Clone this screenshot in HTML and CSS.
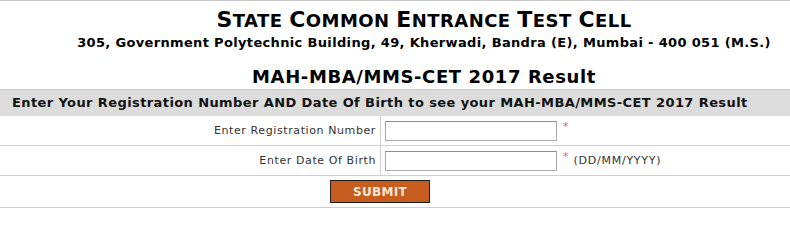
FILE: index.html
```html
<!DOCTYPE html>
<html>

<head>
    <meta charset="utf-8">
    <title>MAH-MBA/MMS-CET 2017 Result</title>
    <link rel="stylesheet" href="styles.css">
</head>

<body>
<div class="top-rule"></div>
<div class="masthead">
    <h1 class="org">
        <span class="cap">S</span>TATE <span class="cap">C</span>OMMON <span class="cap">E</span>NTRANCE <span class="cap">T</span>EST <span class="cap">C</span>ELL
    </h1>
    <p class="address">305, Government Polytechnic Building, 49, Kherwadi, Bandra (E), Mumbai - 400 051 (M.S.)</p>
    <h2 class="exam">MAH-MBA/MMS-CET 2017 Result</h2>
</div>

<form class="result-form" name="resultForm" onsubmit="return false;">
    <div class="band">Enter Your Registration Number AND Date Of Birth to see your MAH-MBA/MMS-CET 2017 Result</div>

    <div class="row">
        <label class="label" for="regno">Enter Registration Number</label>
        <div class="field">
            <input id="regno" class="text" type="text" name="regno">
            <span class="req">*</span>
        </div>
    </div>

    <div class="row">
        <label class="label" for="dob">Enter Date Of Birth</label>
        <div class="field">
            <input id="dob" class="text" type="text" name="dob">
            <span class="req">*</span>
            <span class="hint">(DD/MM/YYYY)</span>
        </div>
    </div>

    <div class="actions">
        <div class="actions-inner">
            <button type="submit" class="submitButton">SUBMIT</button>
        </div>
    </div>
</form>
</body>

</html>
```

FILE: styles.css
```css
body {
    margin: 0;
    background: #fff;
    color: #000;
    font-family: "DejaVu Sans", Verdana, sans-serif;
}

.top-rule {
    height: 1px;
    background: #c8c8c8;
}

/* header block sits a little right of centre (logo cell in the original) */
.masthead {
    padding: 6px 0 0 58px;
    text-align: center;
}

.org {
    margin: 0;
    font-size: 18px;
    line-height: 26px;
    font-weight: bold;
    letter-spacing: 0.45px;
}
.cap {
    font-size: 22px;
}

.address {
    margin: 0;
    font-size: 13px;
    line-height: 18px;
    font-weight: bold;
    letter-spacing: 0.34px;
}

.exam {
    margin: 13px 0 0;
    font-size: 18px;
    line-height: 24px;
    font-weight: bold;
    letter-spacing: 0.6px;
}

.result-form {
    margin: 0;
}

.band {
    border-top: 1px solid #c8c8c8;
    background: #dcdcdc;
    height: 26px;
    line-height: 26px;
    padding-left: 12px;
    font-size: 13px;
    font-weight: bold;
    letter-spacing: 0.4px;
    color: #111;
}

.row {
    display: flex;
    height: 29px;
    border-bottom: 1px solid #cfcfcf;
}
.label {
    box-sizing: border-box;
    width: 381px;
    padding-right: 4px;
    border-right: 1px solid #cfcfcf;
    display: flex;
    align-items: center;
    justify-content: flex-end;
    font-size: 11px;
    letter-spacing: 0.6px;
    color: #333;
}
.field {
    display: flex;
    align-items: center;
    padding-left: 4px;
    font-size: 11px;
    color: #333;
}
.text {
    box-sizing: border-box;
    width: 172px;
    height: 20px;
    margin: 0;
    border: 1px solid #a9a9a9;
    border-top-color: #8f8f8f;
    padding: 1px 3px;
}
.req {
    align-self: flex-start;
    margin: 4px 0 0 6px;
    color: #e0607a;
    font-size: 11px;
}
.hint {
    margin-left: 5px;
    letter-spacing: 0.75px;
}

.actions {
    height: 31px;
    border-bottom: 1px solid #cfcfcf;
}
.actions-inner {
    width: 760px;
    display: flex;
    justify-content: center;
    padding-top: 4px;
}
.submitButton {
    width: 100px;
    height: 23px;
    margin: 0;
    padding: 0;
    background: #c65c1e;
    border: 1px solid #1e1e1e;
    border-radius: 0;
    color: #fbe8d8;
    font-family: "DejaVu Sans", Verdana, sans-serif;
    font-size: 12px;
    font-weight: bold;
    letter-spacing: 0.3px;
    cursor: pointer;
}
```
